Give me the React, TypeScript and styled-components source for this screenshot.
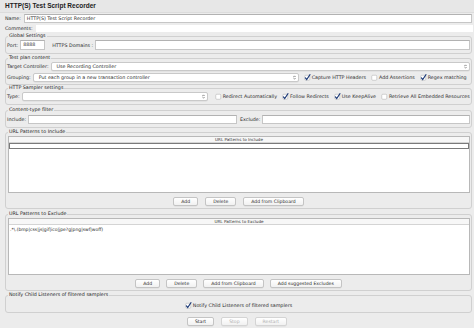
import React from 'react';
import styled, { createGlobalStyle } from 'styled-components';

const GlobalStyle = createGlobalStyle`
  html, body { margin: 0; padding: 0; background: #ececec; }
  #root { width: 474px; height: 328px; }
  * { box-sizing: border-box; }
`;

const Page = styled.div`
  width: 474px;
  height: 328px;
  overflow: hidden;
  background: #ececec;
  font-family: "DejaVu Sans", "Liberation Sans", sans-serif;
  font-size: 4.8px;
  color: #2a2a2a;
  display: flex;
  flex-direction: column;
`;

const Title = styled.div`
  height: 13px;
  line-height: 12px;
  padding-left: 5px;
  font-family: "Liberation Sans", Arial, sans-serif;
  font-weight: bold;
  font-size: 6.5px;
  color: #222;
  background: #e7e7e7;
  border-bottom: 1px solid #dcdcdc;
`;

const TopRow = styled.div<{ $h: number; $pr?: number }>`
  display: flex;
  align-items: center;
  gap: 3px;
  height: ${p => p.$h}px;
  padding: 0 ${p => p.$pr ?? 2}px 0 5px;
`;

const Group = styled.fieldset<{ $mt?: number; $pb?: number }>`
  margin: ${p => p.$mt ?? 0}px 2px 0 5px;
  padding: 0 1px ${p => p.$pb ?? 2}px 1px;
  border: 1px solid #d0d0d0;
  border-radius: 3px;
  min-width: 0;
  display: flex;
  flex-direction: column;
`;

const Legend = styled.legend`
  height: 6px;
  line-height: 6px;
  padding: 0 1px;
  margin-left: 1px;
  color: #222;
`;

const Row = styled.div<{ $h?: number; $pt?: number; $center?: boolean }>`
  display: flex;
  align-items: center;
  justify-content: ${p => (p.$center ? 'center' : 'flex-start')};
  height: ${p => (p.$h ?? 11) + (p.$pt ?? 0)}px;
  padding-top: ${p => p.$pt ?? 0}px;
  gap: 2px;
`;

const Label = styled.span<{ $ml?: number }>`
  white-space: nowrap;
  margin-left: ${p => p.$ml ?? 0}px;
  flex: none;
`;

const Field = styled.div<{ $w?: number; $h?: number }>`
  height: ${p => p.$h ?? 9}px;
  line-height: ${p => (p.$h ?? 9) - 2}px;
  padding: 0 2px;
  background: #fff;
  border: 1px solid #c6c6c6;
  border-top-color: #b2b2b2;
  white-space: nowrap;
  overflow: hidden;
  flex: ${p => (p.$w ? `0 0 ${p.$w}px` : '1 1 0')};
  min-width: 0;
`;

const Plain = styled.div`
  height: 7px;
  background: #fff;
  flex: 1 1 0;
`;

const Select = styled.div<{ $w?: number }>`
  height: 9px;
  display: flex;
  align-items: center;
  justify-content: space-between;
  padding: 0 2px 0 5px;
  background: #fff;
  border: 1px solid #c9c9c9;
  border-radius: 2px;
  box-shadow: 0 0.5px 0 #d8d8d8;
  white-space: nowrap;
  flex: ${p => (p.$w ? `0 0 ${p.$w}px` : '1 1 0')};
  min-width: 0;
`;

const Checks = styled.div<{ $ml: number; $gap: number }>`
  display: flex;
  align-items: center;
  gap: ${p => p.$gap}px;
  margin-left: ${p => p.$ml}px;
`;

const CheckItem = styled.span`
  display: inline-flex;
  align-items: center;
  gap: 1px;
  white-space: nowrap;
`;

const HalfGrid = styled.div`
  display: grid;
  grid-template-columns: 1fr 1fr;
  gap: 3px;
  width: 100%;
  height: 100%;
  align-items: center;
`;

const Half = styled.div`
  display: flex;
  align-items: center;
  gap: 2px;
  min-width: 0;
`;

const Table = styled.div<{ $h: number }>`
  margin: 1px 0 0 1px;
  height: ${p => p.$h}px;
  background: #fff;
  border: 1px solid #b8b8b8;
  display: flex;
  flex-direction: column;
`;

const TableHead = styled.div`
  height: 6px;
  line-height: 5px;
  text-align: center;
  font-size: 4.1px;
  background: #f7f7f7;
  border-bottom: 1px solid #d4d4d4;
  color: #333;
`;

const EditRow = styled.div`
  height: 6px;
  border: 1px solid #7a7a7a;
  background: #fff;
`;

const DataRow = styled.div`
  height: 6px;
  line-height: 6px;
  margin-top: 2px;
  padding-left: 1px;
  font-size: 4.5px;
  white-space: nowrap;
`;

const ButtonBar = styled.div<{ $gap?: number; $pt?: number }>`
  display: flex;
  justify-content: center;
  gap: ${p => p.$gap ?? 7}px;
  padding-top: ${p => p.$pt ?? 4}px;
`;

const Button = styled.button`
  height: 9px;
  padding: 0 7px;
  font-family: inherit;
  font-size: 4.6px;
  line-height: 7px;
  color: #2a2a2a;
  background: linear-gradient(#ffffff, #f1f1f1);
  border: 1px solid #c4c4c4;
  border-radius: 2px;
  box-shadow: 0 0.5px 0 rgba(0, 0, 0, 0.07);
  white-space: nowrap;
  outline: none;
  &:disabled {
    color: #b0b0b0;
    border-color: #d4d4d4;
  }
`;

const Arrows = () => (
  <svg width="3" height="5" viewBox="0 0 3 5">
    <path d="M0.4 2 L1.5 0.9 L2.6 2" stroke="#444" strokeWidth="0.6" fill="none" />
    <path d="M0.4 3 L1.5 4.1 L2.6 3" stroke="#444" strokeWidth="0.6" fill="none" />
  </svg>
);

const Check = ({ on, label }: { on?: boolean; label: string }) => (
  <CheckItem>
    <svg width="7" height="7" viewBox="0 0 7 7">
      <rect x="0.75" y="1.25" width="5" height="5" rx="1" fill="#fff" stroke="#a8a8a8" strokeWidth="0.5" />
      {on && (
        <path d="M1.4 3.9 L2.7 5.5 L6 0.6" stroke="#1d3b78" strokeWidth="1.1" fill="none" strokeLinecap="round" />
      )}
    </svg>
    {label}
  </CheckItem>
);

export default function App() {
  return (
    <Page>
      <GlobalStyle />
      <Title>HTTP(S) Test Script Recorder</Title>
      <TopRow $h={11}>
        <Label>Name:</Label>
        <Field>HTTP(S) Test Script Recorder</Field>
      </TopRow>
      <TopRow $h={9} $pr={1}>
        <Label>Comments:</Label>
        <Plain />
      </TopRow>

      <Group>
        <Legend>Global Settings</Legend>
        <Row $h={12}>
          <Label>Port:</Label>
          <Field $w={25} $h={10}>8888</Field>
          <Label $ml={5}>HTTPS Domains :</Label>
          <Field $h={10} />
        </Row>
      </Group>

      <Group $mt={1} $pb={1}>
        <Legend>Test plan content</Legend>
        <Row>
          <Label>Target Controller:</Label>
          <Select>
            <span>Use Recording Controller</span>
            <Arrows />
          </Select>
        </Row>
        <Row>
          <Label>Grouping:</Label>
          <Select $w={266}>
            <span>Put each group in a new transaction controller</span>
            <Arrows />
          </Select>
          <Checks $ml={3} $gap={5}>
            <Check on label="Capture HTTP Headers" />
            <Check label="Add Assertions" />
            <Check on label="Regex matching" />
          </Checks>
        </Row>
      </Group>

      <Group>
        <Legend>HTTP Sampler settings</Legend>
        <Row>
          <Label>Type:</Label>
          <Select $w={186}>
            <span />
            <Arrows />
          </Select>
          <Checks $ml={5} $gap={5}>
            <Check label="Redirect Automatically" />
            <Check on label="Follow Redirects" />
            <Check on label="Use KeepAlive" />
            <Check label="Retrieve All Embedded Resources" />
          </Checks>
        </Row>
      </Group>

      <Group $mt={2}>
        <Legend>Content-type filter</Legend>
        <Row $pt={1}>
          <HalfGrid>
            <Half>
              <Label>Include:</Label>
              <Field />
            </Half>
            <Half>
              <Label>Exclude:</Label>
              <Field />
            </Half>
          </HalfGrid>
        </Row>
      </Group>

      <Group $mt={1}>
        <Legend>URL Patterns to Include</Legend>
        <Table $h={57}>
          <TableHead>URL Patterns to Include</TableHead>
          <EditRow />
        </Table>
        <ButtonBar>
          <Button>Add</Button>
          <Button>Delete</Button>
          <Button>Add from Clipboard</Button>
        </ButtonBar>
      </Group>

      <Group $mt={2}>
        <Legend>URL Patterns to Exclude</Legend>
        <Table $h={57}>
          <TableHead>URL Patterns to Exclude</TableHead>
          <DataRow>.*\.(bmp|css|js|gif|ico|jpe?g|png|swf|woff)</DataRow>
        </Table>
        <ButtonBar $gap={6}>
          <Button>Add</Button>
          <Button>Delete</Button>
          <Button>Add from Clipboard</Button>
          <Button>Add suggested Excludes</Button>
        </ButtonBar>
      </Group>

      <Group $mt={1} $pb={1}>
        <Legend>Notify Child Listeners of filtered samplers</Legend>
        <Row $pt={2} $center>
          <Check on label="Notify Child Listeners of filtered samplers" />
        </Row>
      </Group>

      <ButtonBar $gap={7} $pt={4}>
        <Button>Start</Button>
        <Button disabled>Stop</Button>
        <Button disabled>Restart</Button>
      </ButtonBar>
    </Page>
  );
}
